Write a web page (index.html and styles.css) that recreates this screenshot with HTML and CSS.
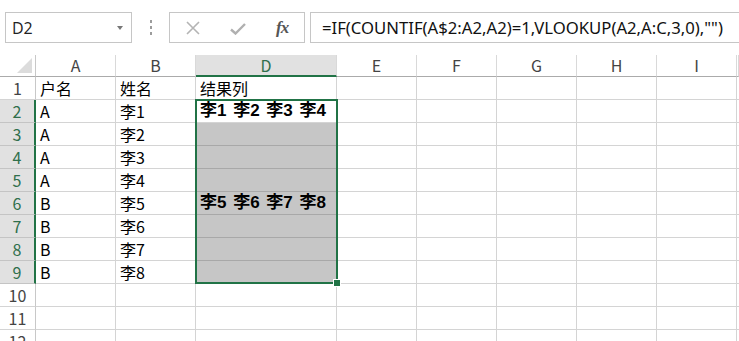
FILE: index.html
```html
<!DOCTYPE html>
<html>
<head>
<meta charset="utf-8">
<link rel="stylesheet" href="styles.css">
</head>
<body>
<div class="fbar">
  <div class="namebox"><span class="nb-text">D2</span><span class="nb-arrow"></span></div>
  <div class="grip"><i></i><i></i><i></i></div>
  <div class="btns">
    <svg class="ic-x" width="14" height="14" viewBox="0 0 14 14"><path d="M1 1L13 13M13 1L1 13" stroke="#b4b4b4" stroke-width="1.6" fill="none"/></svg>
    <svg class="ic-ok" width="16" height="12" viewBox="0 0 16 12"><path d="M1 6.5L5.5 10.5L15 1" stroke="#b0b0b0" stroke-width="2.4" fill="none"/></svg>
    <span class="fx">fx</span>
  </div>
  <div class="formula">=IF(COUNTIF(A$2:A2,A2)=1,VLOOKUP(A2,A:C,3,0),"")</div>
</div>
<div class="sheet">
  <div class="grid">
    <div class="corner"><span class="tri"></span></div>
    <div class="ch">A</div><div class="ch">B</div><div class="ch ch-sel">D</div><div class="ch">E</div><div class="ch">F</div><div class="ch">G</div><div class="ch">H</div><div class="ch">I</div><div class="ch"></div>

    <div class="rh">1</div><div class="c">户名</div><div class="c">姓名</div><div class="c">结果列</div><div class="c"></div><div class="c"></div><div class="c"></div><div class="c"></div><div class="c"></div><div class="c"></div>

    <div class="rh rh-sel">2</div><div class="c">A</div><div class="c">李1</div><div class="c c-act">李1 李2 李3 李4</div><div class="c"></div><div class="c"></div><div class="c"></div><div class="c"></div><div class="c"></div><div class="c"></div>

    <div class="rh rh-sel">3</div><div class="c">A</div><div class="c">李2</div><div class="c c-sel"></div><div class="c"></div><div class="c"></div><div class="c"></div><div class="c"></div><div class="c"></div><div class="c"></div>

    <div class="rh rh-sel">4</div><div class="c">A</div><div class="c">李3</div><div class="c c-sel"></div><div class="c"></div><div class="c"></div><div class="c"></div><div class="c"></div><div class="c"></div><div class="c"></div>

    <div class="rh rh-sel">5</div><div class="c">A</div><div class="c">李4</div><div class="c c-sel"></div><div class="c"></div><div class="c"></div><div class="c"></div><div class="c"></div><div class="c"></div><div class="c"></div>

    <div class="rh rh-sel">6</div><div class="c">B</div><div class="c">李5</div><div class="c c-sel c-bold">李5 李6 李7 李8</div><div class="c"></div><div class="c"></div><div class="c"></div><div class="c"></div><div class="c"></div><div class="c"></div>

    <div class="rh rh-sel">7</div><div class="c">B</div><div class="c">李6</div><div class="c c-sel"></div><div class="c"></div><div class="c"></div><div class="c"></div><div class="c"></div><div class="c"></div><div class="c"></div>

    <div class="rh rh-sel">8</div><div class="c">B</div><div class="c">李7</div><div class="c c-sel"></div><div class="c"></div><div class="c"></div><div class="c"></div><div class="c"></div><div class="c"></div><div class="c"></div>

    <div class="rh rh-sel">9</div><div class="c">B</div><div class="c">李8</div><div class="c c-sel"></div><div class="c"></div><div class="c"></div><div class="c"></div><div class="c"></div><div class="c"></div><div class="c"></div>

    <div class="rh">10</div><div class="c"></div><div class="c"></div><div class="c"></div><div class="c"></div><div class="c"></div><div class="c"></div><div class="c"></div><div class="c"></div><div class="c"></div>

    <div class="rh">11</div><div class="c"></div><div class="c"></div><div class="c"></div><div class="c"></div><div class="c"></div><div class="c"></div><div class="c"></div><div class="c"></div><div class="c"></div>

    <div class="rh">12</div><div class="c"></div><div class="c"></div><div class="c"></div><div class="c"></div><div class="c"></div><div class="c"></div><div class="c"></div><div class="c"></div><div class="c"></div>
  </div>
  <div class="selbox"><span class="handle"></span></div>
</div>
</body>
</html>
```
FILE: styles.css
```css
html, body {
  margin: 0;
  padding: 0;
  background: #fff;
  overflow: hidden;
  width: 739px;
  height: 341px;
}
body {
  font-family: "Noto Sans CJK SC", "Noto Sans", sans-serif;
  color: #000;
}
.fbar {
  display: flex;
  align-items: stretch;
  height: 31px;
  margin-top: 12px;
  padding-left: 5px;
}
.namebox {
  width: 127px;
  box-sizing: border-box;
  border: 1px solid #c6c6c6;
  display: flex;
  align-items: center;
  justify-content: space-between;
  padding: 0 8px 0 6px;
}
.nb-text {
  font-family: "Open Sans", "Noto Sans", sans-serif;
  font-size: 16px;
  color: #222;
}
.nb-arrow {
  width: 0;
  height: 0;
  border-left: 3.5px solid transparent;
  border-right: 3.5px solid transparent;
  border-top: 4px solid #777;
  margin-top: 1px;
}
.grip {
  width: 37px;
  display: flex;
  flex-direction: column;
  align-items: center;
  justify-content: center;
  gap: 3px;
}
.grip i {
  display: block;
  width: 2px;
  height: 3px;
  background: #9c9c9c;
}
.btns {
  width: 136px;
  box-sizing: border-box;
  border: 1px solid #c6c6c6;
  display: flex;
  align-items: center;
  padding-left: 16px;
}
.ic-x { margin-right: 30px; }
.ic-ok { margin-right: 30px; margin-top: 2px; }
.fx {
  font-family: "Liberation Serif", serif;
  font-style: italic;
  font-weight: bold;
  font-size: 17px;
  color: #555;
  letter-spacing: -1px;
}
.formula {
  flex: 1;
  margin-left: 5px;
  box-sizing: border-box;
  border: 1px solid #c6c6c6;
  border-right: none;
  padding-left: 11px;
  font-family: "Noto Sans", sans-serif;
  font-size: 16.7px;
  color: #111;
  line-height: 29px;
  white-space: nowrap;
}
.sheet {
  position: relative;
  margin-top: 12px;
  width: 739px;
}
.grid {
  display: grid;
  grid-template-columns: 36px 80px 80px 141px 80px 80px 80px 80px 80px 2px;
  grid-template-rows: 22px repeat(12, 23px);
}
.corner {
  position: relative;
  border-right: 1px solid #c8c8c8;
  border-bottom: 1px solid #ababab;
  box-sizing: border-box;
}
.tri {
  position: absolute;
  right: 3px;
  bottom: 3px;
  width: 0;
  height: 0;
  border-left: 15px solid transparent;
  border-bottom: 15px solid #dcdcdc;
}
.ch {
  box-sizing: border-box;
  border-right: 1px solid #d9d9d9;
  border-bottom: 1px solid #ababab;
  text-align: center;
  font-size: 16px;
  line-height: 21px;
  color: #444;
}
.ch-sel {
  background: #e1e1e1;
  border-bottom: 2px solid #217346;
  color: #2f6f4c;
}
.rh {
  box-sizing: border-box;
  border-right: 1px solid #c8c8c8;
  border-bottom: 1px solid #d4d4d4;
  text-align: center;
  font-size: 16px;
  line-height: 22px;
  color: #444;
}
.rh-sel {
  background: #e1e1e1;
  color: #2f6f4c;
  border-right: 2px solid #217346;
  border-bottom-color: #c4c4c4;
}
.c {
  box-sizing: border-box;
  border-right: 1px solid #d4d4d4;
  border-bottom: 1px solid #d4d4d4;
  font-size: 16px;
  line-height: 22px;
  padding-left: 4px;
  white-space: nowrap;
}
.c-sel {
  background: #c6c6c6;
  border-bottom-color: #a8a8a8;
}
.c-act, .c-bold {
  font-weight: bold;
  font-family: "Liberation Sans", "Noto Sans CJK SC", sans-serif;
  font-size: 17px;
  word-spacing: 2px;
}
.selbox {
  position: absolute;
  left: 195px;
  top: 44px;
  width: 143px;
  height: 185px;
  box-sizing: border-box;
  border: 2px solid #217346;
  pointer-events: none;
}
.handle {
  position: absolute;
  right: -5px;
  bottom: -5px;
  width: 6px;
  height: 6px;
  background: #217346;
  border: 1px solid #fff;
}
```
